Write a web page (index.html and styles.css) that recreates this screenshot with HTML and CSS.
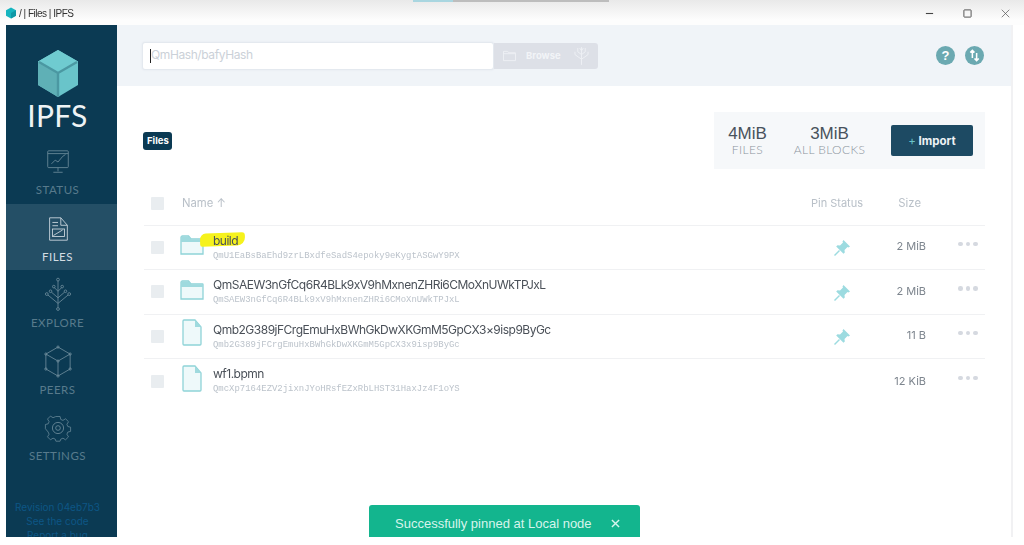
FILE: index.html
```html
<!DOCTYPE html>
<html lang="en">
<head>
<meta charset="utf-8">
<title>/ | Files | IPFS</title>
<link rel="stylesheet" href="styles.css">
</head>
<body>
<div class="page">
  <div class="titlebar">
    <span class="loadbar"><i></i></span>
    <svg class="title-icon" viewBox="0 0 10 11"><polygon points="5,0 10,2.7 10,8.3 5,11 0,8.3 0,2.7" fill="#17b5c0"/><polygon points="5,5.5 10,2.7 10,8.3 5,11" fill="#0f98a6"/></svg>
    <span class="title-text">/ | Files | IPFS</span>
    <div class="win-controls">
      <svg viewBox="0 0 10 10"><path d="M1 5h8" stroke="#444" stroke-width="1.2"/></svg>
      <svg viewBox="0 0 10 10"><rect x="1" y="1" width="8" height="8" rx=".6" fill="none" stroke="#444" stroke-width="1"/></svg>
      <svg viewBox="0 0 10 10"><path d="M.8.8l8.4 8.4M9.2.8L.8 9.2" stroke="#555" stroke-width=".8"/></svg>
    </div>
  </div>
  <div class="app">
    <aside class="sidebar">
      <div class="brand">
        <svg class="logo" viewBox="0 0 40 47">
          <polygon points="20,0 40,11.5 40,35 20,47 0,35 0,11.5" fill="#69c4ca"/>
          <polygon points="20,0 40,11.5 20,23 0,11.5" fill="#6fcbd0"/>
          <polygon points="0,11.5 20,23 20,47 0,35" fill="#5fb0b6"/>
          <path d="M20 23v24M20 23L1 12M20 23l19-11" stroke="#4b98a2" stroke-width="2.4" fill="none"/>
        </svg>
        <div class="brand-name">IPFS</div>
      </div>
      <nav class="nav">
        <a class="nav-item">
          <svg class="nav-icon" viewBox="0 0 30 30" fill="none"><rect x="4" y="3" width="22" height="18" rx="1"/><path d="M4 6h22M15 21v4M10 26h10M8 17l4-4 3 2 5-6 3-2"/></svg>
          <span>STATUS</span>
        </a>
        <a class="nav-item active">
          <svg class="nav-icon" viewBox="0 0 30 30" fill="none"><path d="M6 3h12l7 8v16H6zM18 3v8h7"/><rect x="9" y="15" width="13" height="8"/><path d="M9 8h6M9 11.500h6M10 22l10-6"/></svg>
          <span>FILES</span>
        </a>
        <a class="nav-item">
          <svg class="nav-icon" viewBox="0 0 30 30" fill="none"><path d="M15 28.500V0M15 24L4.200 15M15 24L25.800 15M15 18L8 12M15 18L22 12M15 11L11 7M15 11L19 7"/><circle cx="15" cy="-1.500" r="1.500"/><circle cx="15" cy="30" r="1.500"/><circle cx="3" cy="14" r="1.500"/><circle cx="27" cy="14" r="1.500"/><circle cx="7" cy="11" r="1.400"/><circle cx="23" cy="11" r="1.400"/><circle cx="10.500" cy="6" r="1.400"/><circle cx="19.500" cy="6" r="1.400"/></svg>
          <span>EXPLORE</span>
        </a>
        <a class="nav-item">
          <svg class="nav-icon" viewBox="0 0 30 30" fill="none"><polygon points="15,-1 28,6.500 28,22.500 15,30 2,22.500 2,6.500"/><path d="M2 6.500l13 7.500 13-7.500M15 14v16"/><circle cx="15" cy="-1" r="1.200"/><circle cx="28" cy="6.500" r="1.200"/><circle cx="28" cy="22.500" r="1.200"/><circle cx="15" cy="30" r="1.200"/><circle cx="2" cy="22.500" r="1.200"/><circle cx="2" cy="6.500" r="1.200"/><circle cx="15" cy="14" r="1.200"/></svg>
          <span>PEERS</span>
        </a>
        <a class="nav-item">
          <svg class="nav-icon" viewBox="0 0 30 30" fill="none"><path d="M12.500 3h5l.8 3.500 2.600 1.100 3.100-1.900 3.500 3.500-1.900 3.100 1.100 2.600 3.300.8v5l-3.300.8-1.100 2.600 1.900 3.100-3.500 3.500-3.100-1.900-2.600 1.100-.8 2.500h-5l-.8-2.500-2.600-1.100-3.100 1.900-3.500-3.500 1.900-3.100-1.100-2.600L0 17.500v-5l3.300-.8 1.100-2.600-1.900-3.100L6 2.500 9.100 4.400l2.600-1.100z" transform="translate(1.500 0) scale(.9)"/><circle cx="15" cy="15" r="6"/><circle cx="15" cy="15" r="2.500"/></svg>
          <span>SETTINGS</span>
        </a>
      </nav>
      <div class="side-links">
        <div>Revision 04eb7b3</div>
        <div>See the code</div>
        <div>Report a bug</div>
      </div>
    </aside>
    <main class="main">
      <header class="topband">
        <div class="searchbox"><span class="caret"></span><span class="placeholder">QmHash/bafyHash</span></div>
        <div class="browse">
          <svg class="browse-folder" viewBox="0 0 14 12" fill="none"><path d="M.5 11V1h4.500l1 1.500h7.500V11zM.5 3.500h13"/></svg>
          <span>Browse</span>
          <svg class="browse-tree" viewBox="0 0 16 20" fill="none"><path d="M8 20V1M8 14L1 9V6M8 14l7-5V6M8 9L4 6V2M8 9l4-3V2M8 5L6 2M8 5l2-3"/></svg>
        </div>
        <div class="round-btns">
          <span class="round-btn">?</span>
          <span class="round-btn"><svg viewBox="0 0 20 20" fill="none"><path d="M7.500 13V4M5 6.500L7.500 4 10 6.500M12.500 7v9M10 13.500l2.500 2.500 2.500-2.500"/></svg></span>
        </div>
      </header>
      <section class="content">
        <div class="toolbar">
          <span class="crumb">Files</span>
          <div class="stats">
            <div class="stat stat-files"><b>4MiB</b><small>FILES</small></div>
            <div class="stat stat-blocks"><b>3MiB</b><small>ALL BLOCKS</small></div>
            <button class="import"><em>+</em> Import</button>
          </div>
        </div>
        <div class="table">
          <div class="row head">
            <span class="check"></span>
            <span class="head-name">Name ↑</span>
            <span class="head-pin">Pin Status</span>
            <span class="head-size">Size</span>
            <span></span>
          </div>
          <div class="row">
            <span class="check"></span>
            <svg class="ic-folder" viewBox="0 0 24 20"><path d="M1 19V2.500A1.500 1.500 0 0 1 2.500 1h6l2.500 3h11.500A.500.500 0 0 1 23 4.500V19z" fill="#eef9fa" stroke="#8fd3d8" stroke-width="1.300"/><path d="M1 1.500h8l2.500 3H23V7H1z" fill="#9fdade"/></svg>
            <div class="cell-name"><div class="fname"><span class="marked">build</span></div><div class="hash">QmU1EaBsBaEhd9zrLBxdfeSadS4epoky9eKygtASGwY9PX</div></div>
            <svg class="ic-pin" viewBox="0 0 16 16"><path d="M9.500 0L16 6.500 14.500 7.500 13.500 7 10.500 10 10.800 12.500 9.500 13.800 2.200 6.500 3.500 5.200 6 5.500 9 2.500 8.500 1.500z" fill="#9cdbe0"/><path d="M5.500 10.500L.5 15.500" stroke="#9cdbe0" stroke-width="1.400"/></svg>
            <span class="size">2 MiB</span>
            <span class="dots"><i></i><i></i><i></i></span>
          </div>
          <div class="row">
            <span class="check"></span>
            <svg class="ic-folder" viewBox="0 0 24 20"><path d="M1 19V2.500A1.500 1.500 0 0 1 2.500 1h6l2.500 3h11.500A.500.500 0 0 1 23 4.500V19z" fill="#eef9fa" stroke="#8fd3d8" stroke-width="1.300"/><path d="M1 1.500h8l2.500 3H23V7H1z" fill="#9fdade"/></svg>
            <div class="cell-name"><div class="fname">QmSAEW3nGfCq6R4BLk9xV9hMxnenZHRi6CMoXnUWkTPJxL</div><div class="hash">QmSAEW3nGfCq6R4BLk9xV9hMxnenZHRi6CMoXnUWkTPJxL</div></div>
            <svg class="ic-pin" viewBox="0 0 16 16"><path d="M9.500 0L16 6.500 14.500 7.500 13.500 7 10.500 10 10.800 12.500 9.500 13.800 2.200 6.500 3.500 5.200 6 5.500 9 2.500 8.500 1.500z" fill="#9cdbe0"/><path d="M5.500 10.500L.5 15.500" stroke="#9cdbe0" stroke-width="1.400"/></svg>
            <span class="size">2 MiB</span>
            <span class="dots"><i></i><i></i><i></i></span>
          </div>
          <div class="row">
            <span class="check"></span>
            <svg class="ic-file" viewBox="0 0 20 27"><path d="M1 2a1 1 0 0 1 1-1h11l6 7v17a1 1 0 0 1-1 1H2a1 1 0 0 1-1-1z" fill="#eef9fa" stroke="#8fd3d8" stroke-width="1.300"/><path d="M13 1v7h6z" fill="#9fdade"/></svg>
            <div class="cell-name"><div class="fname">Qmb2G389jFCrgEmuHxBWhGkDwXKGmM5GpCX3×9isp9ByGc</div><div class="hash">Qmb2G389jFCrgEmuHxBWhGkDwXKGmM5GpCX3x9isp9ByGc</div></div>
            <svg class="ic-pin" viewBox="0 0 16 16"><path d="M9.500 0L16 6.500 14.500 7.500 13.500 7 10.500 10 10.800 12.500 9.500 13.800 2.200 6.500 3.500 5.200 6 5.500 9 2.500 8.500 1.500z" fill="#9cdbe0"/><path d="M5.500 10.500L.5 15.500" stroke="#9cdbe0" stroke-width="1.400"/></svg>
            <span class="size">11 B</span>
            <span class="dots"><i></i><i></i><i></i></span>
          </div>
          <div class="row last">
            <span class="check"></span>
            <svg class="ic-file" viewBox="0 0 20 27"><path d="M1 2a1 1 0 0 1 1-1h11l6 7v17a1 1 0 0 1-1 1H2a1 1 0 0 1-1-1z" fill="#eef9fa" stroke="#8fd3d8" stroke-width="1.300"/><path d="M13 1v7h6z" fill="#9fdade"/></svg>
            <div class="cell-name"><div class="fname">wf1.bpmn</div><div class="hash">QmcXp7164EZV2jixnJYoHRsfEZxRbLHST31HaxJz4F1oYS</div></div>
            <span></span>
            <span class="size">12 KiB</span>
            <span class="dots"><i></i><i></i><i></i></span>
          </div>
        </div>
      </section>
      <div class="toast"><span>Successfully pinned at Local node</span><svg viewBox="0 0 10 10"><path d="M1 1l8 8M9 1l-8 8" stroke="#d8f5ee" stroke-width="1.600"/></svg></div>
    </main>
  </div>
</div>
</body>
</html>
```

FILE: styles.css
```css
* { box-sizing: border-box; }
html, body { margin: 0; height: 100%; background: #fff; overflow: hidden; }
.page { width: 1024px; height: 545px; padding-bottom: 8px; display: flex; flex-direction: column; font-family: Inter, "Liberation Sans", sans-serif; filter: blur(.6px); }

.titlebar { height: 25px; flex: none; display: flex; align-items: center; padding: 1px 14px 0 6px; background: linear-gradient(#e9e9e9, #fdfdfd 80%); position: relative; }
.loadbar { position: absolute; left: 413px; top: 0; width: 196px; height: 2px; background: #bdbdbd; }
.loadbar i { display: block; width: 40px; height: 2px; background: #a9d6e0; }
.title-icon { width: 10px; height: 12px; margin-right: 3px; margin-top: -1px; }
.title-text { font: 10px "Liberation Sans", sans-serif; letter-spacing: -.5px; color: #333; }
.win-controls { margin-left: auto; display: flex; gap: 29px; }
.win-controls svg { width: 9px; height: 9px; }

.app { flex: 1; min-height: 0; display: flex; padding-left: 6px; }
.sidebar { width: 111px; flex: none; background: #0b3a53; display: flex; flex-direction: column; overflow: hidden; }
.brand { height: 112px; flex: none; display: flex; flex-direction: column; align-items: center; padding: 25px 8px 0 0; }
.logo { width: 40px; height: 47px; display: block; }
.brand-name { font: 400 30px/30px Lato, "Liberation Sans", sans-serif; color: #eef3f5; margin-top: 3px; letter-spacing: .3px; }
.nav { display: flex; flex-direction: column; }
.nav-item { height: 66.500px; display: flex; flex-direction: column; align-items: center; padding: 11px 8px 0 0; font: 400 11.500px/14px Lato, sans-serif; letter-spacing: .5px; color: #587a8c; }
.nav-item.active { background: #244f66; color: #d3dde3; }
.nav-icon { width: 28px; height: 28px; margin-bottom: 7px; stroke: #6c8b9b; stroke-width: .9; overflow: visible; }
.active .nav-icon { stroke: #d3dde3; }
.side-links { margin-top: 30px; padding-right: 8px; text-align: center; font: 10px/14px Inter, sans-serif; color: #0d5685; }

.main { flex: 1; position: relative; margin-right: 11px; border-right: 2px solid #f1f1f3; display: flex; flex-direction: column; min-width: 0; }
.topband { height: 61px; flex: none; background: #f0f4f8; display: flex; align-items: center; padding: 0 27px 0 25px; }
.searchbox { width: 352px; height: 28px; background: #fff; border: 1px solid #e4e9ef; border-radius: 3px; display: flex; align-items: center; padding-left: 7px; box-shadow: 0 0 2px #dfe5ec; }
.caret { width: 1px; height: 14px; background: #222; }
.placeholder { font: 12px Inter, sans-serif; letter-spacing: -.4px; color: #cbd1d8; margin-top: -3px; }
.browse { width: 104px; height: 26px; background: #dde0e7; border-radius: 0 3px 3px 0; display: flex; align-items: center; padding-left: 9px; font: 700 9.500px Inter, sans-serif; color: #f2f4f7; }
.browse-folder { width: 13px; height: 12px; stroke: #eef0f4; margin-right: 10px; }
.browse-tree { width: 15px; height: 19px; stroke: #eef0f4; margin-left: 13px; }
.round-btns { margin-left: auto; display: flex; gap: 10px; }
.round-btn { width: 19px; height: 19px; border-radius: 50%; background: #6ba9b1; color: #fff; display: flex; align-items: center; justify-content: center; font: 700 13px "Liberation Sans", sans-serif; }
.round-btn svg { width: 17px; height: 17px; stroke: #fff; stroke-width: 1.800; }

.content { flex: 1; padding: 26px 26px 0 27px; min-height: 0; }
.toolbar { height: 57px; display: flex; align-items: center; justify-content: space-between; }
.crumb { margin-left: -1px; background: #0b3a53; color: #fff; font: 700 9.500px/18px Inter, sans-serif; padding: 0 4px; border-radius: 3px; width: 29px; text-align: center; }
.stats { width: 271px; height: 57px; background: #f6f8fa; display: flex; align-items: center; }
.stat { display: flex; flex-direction: column; align-items: center; color: #48525c; }
.stat b { font: 400 17px/18px "Liberation Sans", sans-serif; }
.stat small { font: 300 12px/13px Lato, sans-serif; color: #8b949d; letter-spacing: .4px; white-space: nowrap; }
.stat-files { margin-left: 14px; width: 39px; }
.stat-blocks { margin-left: 26px; width: 73px; }
.import { margin-left: 25px; width: 82px; height: 31px; border: 0; border-radius: 2px; background: #1d4a63; color: #edf2f5; font: 700 11.500px Inter, sans-serif; padding: 0; }
.import em { color: #69c4ca; font-style: normal; font-weight: 400; }

.table { margin-top: 12.500px; }
.row { display: grid; grid-template-columns: 36px 33px 1fr 80px 46px 59px; align-items: center; height: 44.600px; border-bottom: 1px solid #f0f1f3; position: relative; }
.row.head { height: 44px; font: 11.300px Inter, sans-serif; color: #b9c0c8; }
.row.last { border-bottom: 0; }
.head-name { grid-column: 2 / 4; padding-left: 2px; }
.head-pin { text-align: center; font-size: 11px; padding-right: 6px; }
.head-size { text-align: right; padding-right: 5px; }
.check { width: 13px; height: 13px; margin-left: 7px; background: #e9edf0; border-radius: 1px; }
.ic-folder { width: 24px; height: 20px; margin-top: -4px; }
.ic-file { width: 20px; height: 27px; margin-left: 2px; margin-top: -7px; }
.cell-name { align-self: start; padding-top: 6px; min-width: 0; position: relative; z-index: 0; }
.fname { font: 400 12px/17px Inter, sans-serif; letter-spacing: -.5px; color: #4a5058; white-space: nowrap; }
.marked { position: relative; }
.marked::before { content: ""; position: absolute; left: -13px; top: 0; width: 45px; height: 13px; background: #f6f21c; border-radius: 6px 3px 8px 2px; transform: rotate(-2deg); z-index: -1; }
.hash { font: 8.950px/15px "Liberation Mono", monospace; color: #bcc3cb; white-space: nowrap; }
.ic-pin { width: 16px; height: 16px; justify-self: center; margin-left: 4px; margin-top: 2px; }
.size { text-align: right; font: 11px Inter, sans-serif; color: #7d858e; margin-top: -2px; }
.dots { display: flex; gap: 3px; padding-left: 32px; margin-top: -7px; }
.dots i { width: 4.500px; height: 4.500px; border-radius: 50%; background: #d5d9e0; }

.toast { position: absolute; left: 252px; bottom: 0; width: 271px; height: 32px; background: #13b58e; border-radius: 3px 3px 0 0; display: flex; align-items: center; padding: 4px 0 0 26px; font: 13px "Liberation Sans", sans-serif; color: #d7f4ec; }
.toast svg { width: 9px; height: 9px; margin-left: 19px; }
```
